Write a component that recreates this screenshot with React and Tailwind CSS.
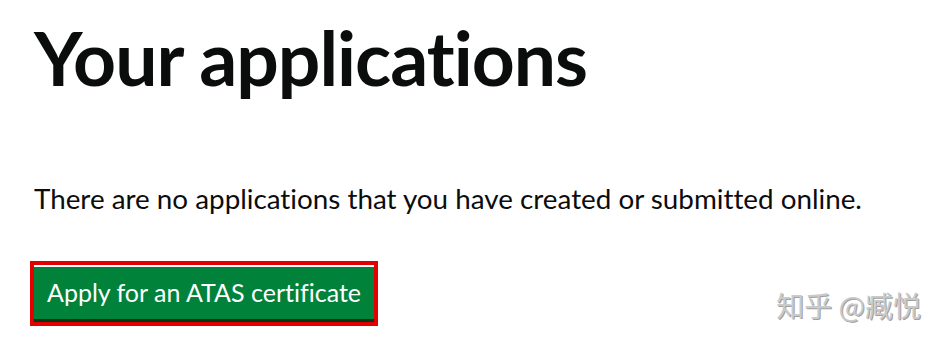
export default function App() {
  return (
    <div className="relative min-h-[343px] bg-white text-[#0b0c0c] font-['Lato','Liberation_Sans',sans-serif] [font-variant-ligatures:none]">
      <main className="px-[34px] pt-[16px]">
        <h1 className="text-[75px] font-bold leading-[1.1] tracking-[-1px]">Your applications</h1>

        <p className="mt-[83px] text-[27.8px] leading-[1.25]">
          There are no applications that you have created or submitted online.
        </p>

        <div className="mt-[45px] -ml-[4px] inline-block border-[4px] border-[#e00000]">
          <div className="pt-[2px] bg-white">
            <button
              type="button"
              className="block bg-[#00823b] px-[13px] pt-[10px] pb-[11px] text-[25px] leading-[1.25] text-white shadow-[0_3px_0_#003618] mb-[3px]"
            >
              Apply for an ATAS certificate
            </button>
          </div>
        </div>
      </main>

      <div className="absolute right-[24px] bottom-[24px] text-[28px] leading-none text-[#cacaca] font-['Noto_Sans_CJK_SC',sans-serif] [text-shadow:1px_1px_0_#a0a0a0]">
        知乎 @臧悦
      </div>
    </div>
  );
}
